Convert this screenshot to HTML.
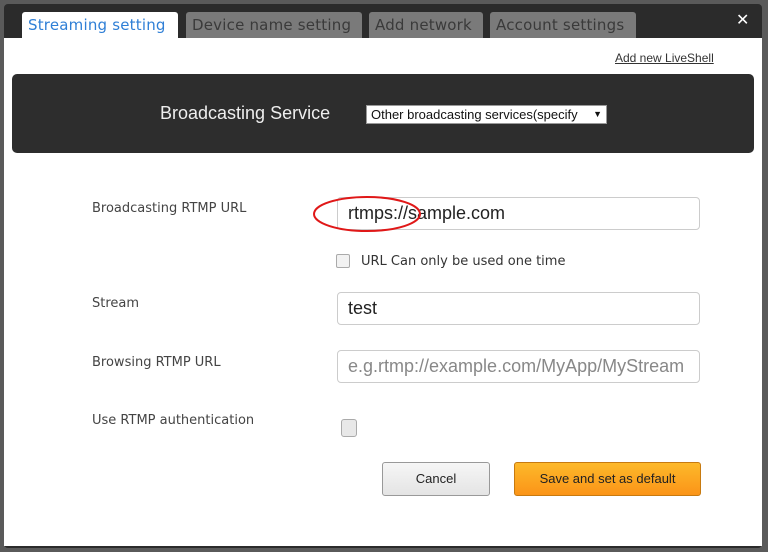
<!DOCTYPE html>
<html><head><style>
body{margin:0;width:768px;height:552px;background:#5a5a5a;position:relative;overflow:hidden;font-family:"DejaVu Sans","Liberation Sans",sans-serif}
.frame{position:absolute;left:4px;top:4px;width:758px;height:544px;background:#2b2b2b;border-radius:4px}
.body{position:absolute;left:4px;top:38px;width:758px;height:508px;background:#fff}
.tab{position:absolute;top:12px;height:26px;background:#7a7a7a;color:#3a3a3a;font-size:15px;line-height:26px;padding-left:6px;border-radius:3px 3px 0 0;box-sizing:border-box;letter-spacing:.2px;white-space:nowrap;overflow:hidden}
.abs{position:absolute}
.lbl{position:absolute;left:92px;font-size:13px;color:#444}
.inp{position:absolute;left:337px;width:363px;height:33px;border:1px solid #ccc;border-radius:4px;box-sizing:border-box;font-family:"Liberation Sans",sans-serif;font-size:18px;line-height:31px;padding-left:10px;color:#222}
</style></head><body>
<div class="frame"></div>
<div class="body"></div>
<div class="tab" style="left:22px;width:156px;background:#fff;color:#2f7fd6">Streaming setting</div>
<div class="tab" style="left:186px;width:176px">Device name setting</div>
<div class="tab" style="left:369px;width:114px">Add network</div>
<div class="tab" style="left:490px;width:146px">Account settings</div>
<div class="abs" style="left:736px;top:10px;color:#fff;font-size:16px;font-family:'Liberation Sans',sans-serif">✕</div>
<div class="abs" style="left:615px;top:51px;font-size:12px;color:#333;text-decoration:underline;font-family:'Liberation Sans',sans-serif">Add new LiveShell</div>
<div class="abs" style="left:12px;top:74px;width:742px;height:79px;background:#2d2d2d;border-radius:5px"></div>
<div class="abs" style="left:160px;top:103px;color:#eee;font-size:18px;font-family:'Liberation Sans',sans-serif">Broadcasting Service</div>
<div class="abs" style="left:366px;top:105px;width:241px;height:19px;background:#fff;border:1px solid #999;box-sizing:border-box;font-family:'Liberation Sans',sans-serif;font-size:13px;line-height:17px;padding-left:4px;color:#111;overflow:hidden;white-space:nowrap">Other broadcasting services(specify<span style="position:absolute;right:4px;font-size:9px">▼</span></div>
<div class="lbl" style="top:201px">Broadcasting RTMP URL</div>
<div class="inp" style="top:197px">rtmps://sample.com</div>
<svg class="abs" style="left:310px;top:194px" width="116" height="40"><ellipse cx="57" cy="20" rx="53" ry="17" fill="none" stroke="#e01818" stroke-width="2"/></svg>
<div class="abs" style="left:336px;top:254px;width:12px;height:12px;border:1px solid #aaa;border-radius:2px;background:#f2f2f2"></div>
<div class="abs" style="left:361px;top:254px;font-size:13px;color:#333">URL Can only be used one time</div>
<div class="lbl" style="top:296px">Stream</div>
<div class="inp" style="top:292px">test</div>
<div class="lbl" style="top:355px">Browsing RTMP URL</div>
<div class="inp" style="top:350px;color:#888">e.g.rtmp://example.com/MyApp/MyStream</div>
<div class="lbl" style="top:413px">Use RTMP authentication</div>
<div class="abs" style="left:341px;top:419px;width:16px;height:18px;border:1px solid #aaa;border-radius:3px;background:#e8e8e8;box-sizing:border-box"></div>
<div class="abs" style="left:382px;top:462px;width:108px;height:34px;border:1px solid #999;border-radius:3px;box-sizing:border-box;background:linear-gradient(#f6f6f6,#e4e4e4);text-align:center;line-height:32px;font-size:13px;color:#222;font-family:'Liberation Sans',sans-serif">Cancel</div>
<div class="abs" style="left:514px;top:462px;width:187px;height:34px;border:1px solid #c77a10;border-radius:3px;box-sizing:border-box;background:linear-gradient(#fdb92a,#fb9418);text-align:center;line-height:32px;font-size:13px;color:#222;font-family:'Liberation Sans',sans-serif">Save and set as default</div>
</body></html>
